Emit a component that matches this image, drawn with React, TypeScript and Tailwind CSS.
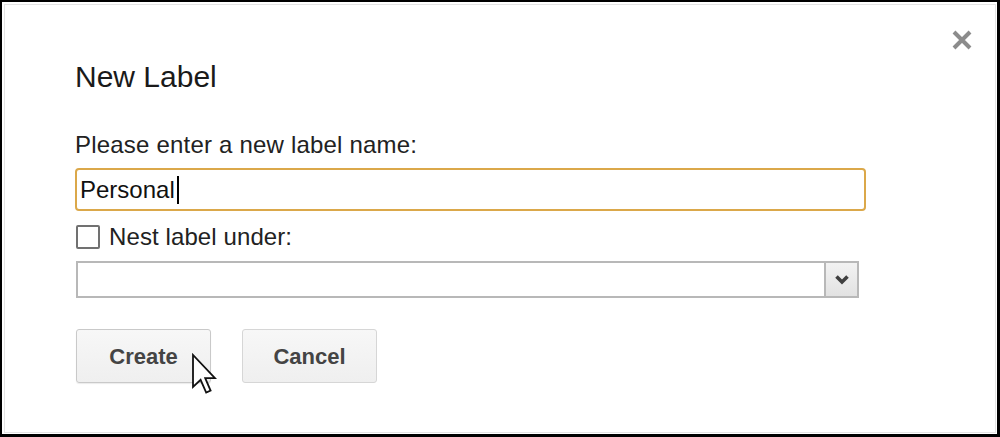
import React from "react";

function Cursor() {
  return (
    <svg
      className="absolute left-[189px] top-[351px]"
      width="26"
      height="42"
      viewBox="0 0 13 21"
    >
      <path
        d="M1 1 L1 17 L4.8 13.4 L7.6 19.8 L9.8 18.8 L7.1 12.6 L12 12.6 Z"
        fill="#ffffff"
        stroke="#111111"
        strokeWidth="0.9"
        strokeLinejoin="miter"
      />
    </svg>
  );
}

export default function App() {
  return (
    <div
      className="relative w-[1000px] h-[437px] bg-white border-t-2 border-l-2 border-r-[3px] border-b-[3px] border-black pt-[2px] pl-[2px] pr-px pb-px flex"
      style={{ fontFamily: '"Liberation Sans", Arial, sans-serif' }}
    >
      <div className="relative flex-1 border border-[#e4e4e4] pl-[70px] pt-[55px] text-[#222]">
        {/* close */}
        <svg
          className="absolute right-[22px] top-[24px]"
          width="22"
          height="22"
          viewBox="0 0 22 22"
        >
          <path
            d="M3 3 L19 19 M19 3 L3 19"
            stroke="#8c8c8c"
            strokeWidth="4"
            strokeLinecap="butt"
          />
        </svg>

        <div className="text-[30px] leading-[34px] text-[#1a1a1a]">New Label</div>

        <div className="mt-[37px] text-[24px] leading-[28px] tracking-[0.2px]">
          Please enter a new label name:
        </div>

        <div className="mt-[9px] w-[791px] h-[43px] border-2 border-[#dba84a] rounded-[4px] pl-[3px] flex items-center">
          <span className="text-[24px] leading-[28px] text-[#111]">Personal</span>
          <span className="ml-[2px] w-[2px] h-[28px] bg-black" />
        </div>

        <div className="mt-[14px] pl-px flex items-center h-[24px]">
          <div className="w-[24px] h-[24px] border-2 border-[#717171] rounded-[2px] bg-white" />
          <span className="ml-[9px] text-[24px] leading-[28px] tracking-[0.1px]">Nest label under:</span>
        </div>

        <div className="mt-[12px] ml-px w-[783px] h-[37px] border-2 border-[#b8b8b8] flex justify-end bg-white">
          <div className="w-[33px] h-full border-l-2 border-[#b8b8b8] bg-gradient-to-b from-[#f2f2f2] to-[#e2e2e2] flex items-center justify-center">
            <svg width="16" height="12" viewBox="0 0 16 12">
              <path d="M2.5 2.5 L8 8 L13.5 2.5" fill="none" stroke="#3f3f3f" strokeWidth="3.6" />
            </svg>
          </div>
        </div>

        <div className="mt-[31px] ml-px flex gap-[31px]">
          <button className="w-[135px] h-[54px] border border-[#c9c9c9] rounded-[3px] bg-gradient-to-b from-[#f7f7f7] to-[#efefef] shadow-[0_1px_1px_rgba(0,0,0,0.08)] text-[22px] font-bold text-[#444]">
            Create
          </button>
          <button className="w-[135px] h-[54px] border border-[#d6d6d6] rounded-[3px] bg-gradient-to-b from-[#f7f7f7] to-[#efefef] text-[22px] font-bold text-[#444]">
            Cancel
          </button>
        </div>
      </div>
      <Cursor />
    </div>
  );
}
